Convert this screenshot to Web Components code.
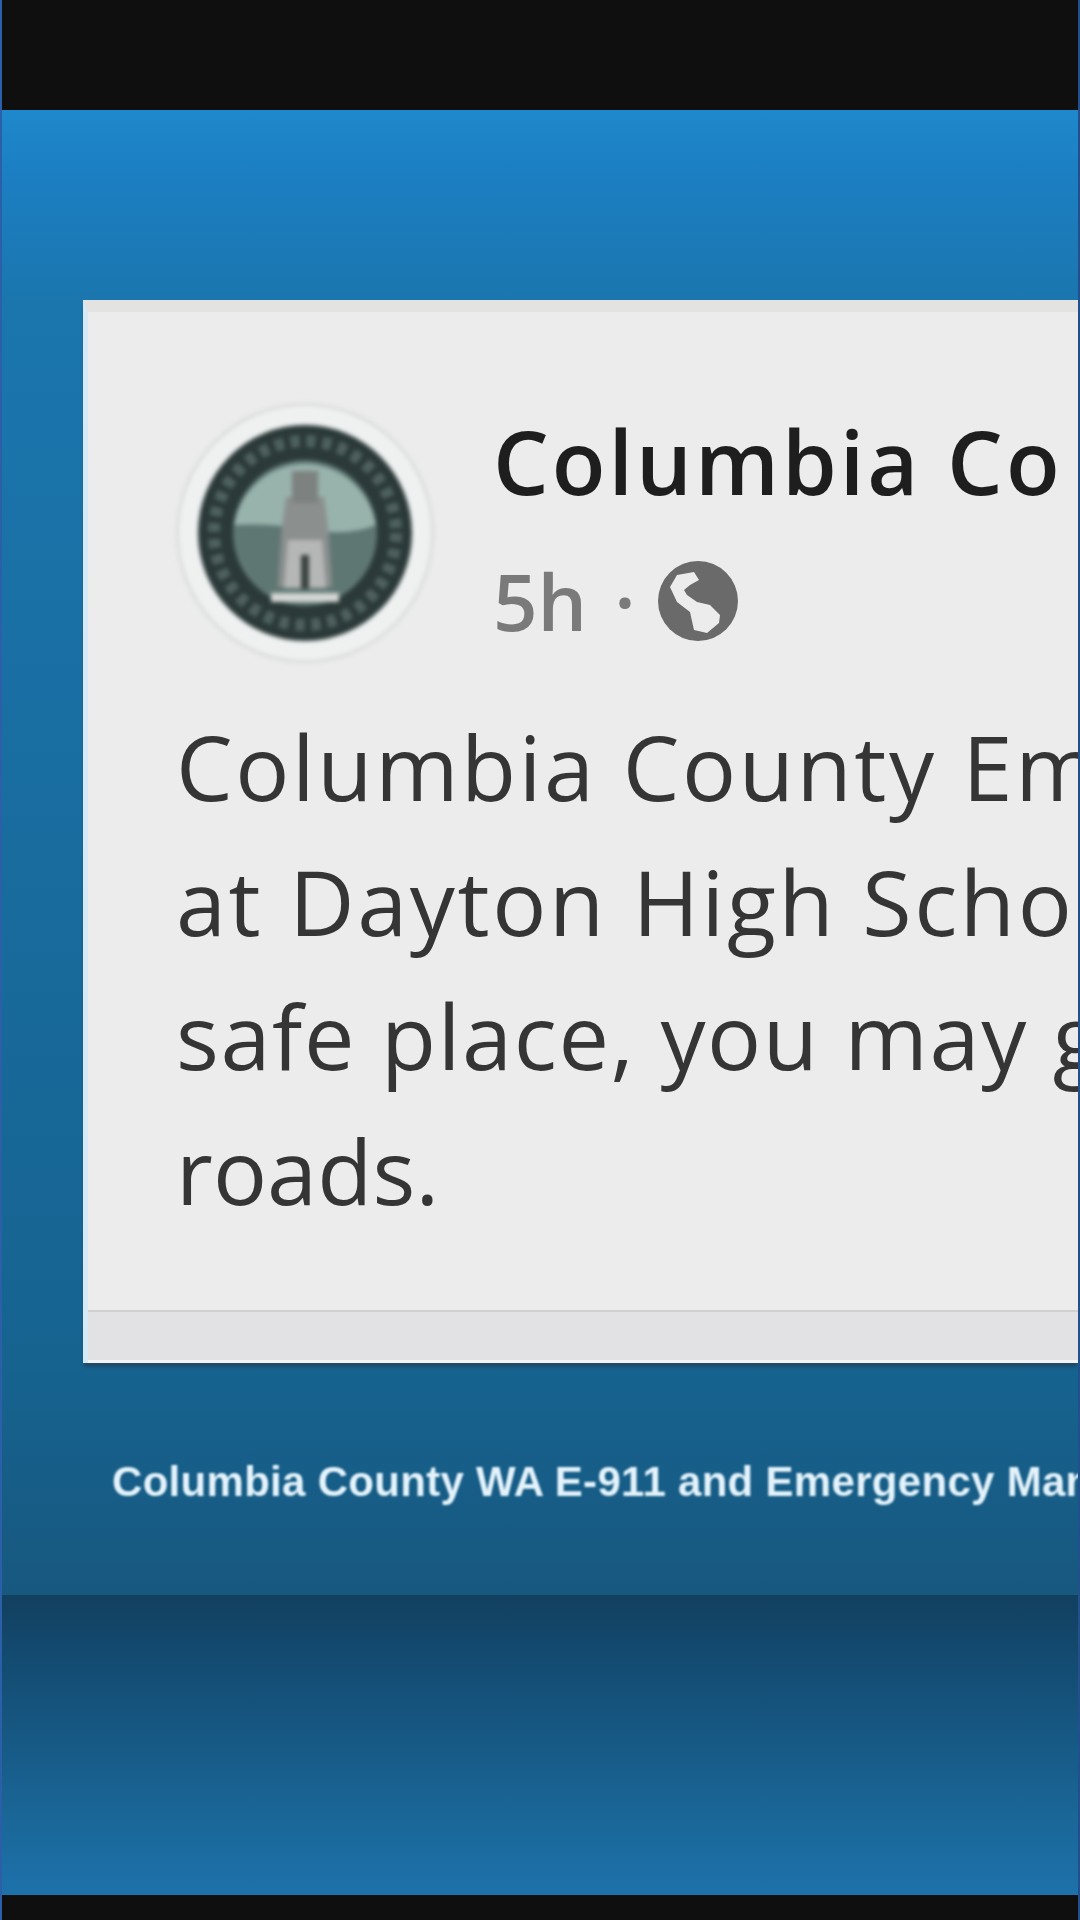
<!DOCTYPE html>
<html lang="en">
    <head>
        <meta charset="utf-8"/>
        <title>Columbia County post</title>
        <style>
            html, body { margin: 0; padding: 0; background: #0f0f0f; }
        </style>
    </head>
    <body>
        <news-screen>
            <post-card>
                <span slot="name">Columbia Co</span>
                <span slot="time">5h</span>
                <span slot="line">Columbia County Em</span>
                <span slot="line">at Dayton High Scho</span>
                <span slot="line" style="letter-spacing: 1.600px">safe place, you may g</span>
                <span slot="line" style="letter-spacing: 0.100px">roads.</span>
            </post-card>
            <span slot="caption">Columbia County WA E-911 and Emergency Man</span>
        </news-screen>

        <script>
            class CountySeal extends HTMLElement {
                constructor() {
                    super();
                    let shadowDom = this.attachShadow({mode: 'open'});
                    shadowDom.innerHTML = `
                        <style>
                            :host { display: block; width: 258px; height: 260px; flex: none; filter: blur(2.200px); }
                            svg { display: block; width: 100%; height: 100%; }
                        </style>
                        <svg viewBox="0 0 258 260">
                            <ellipse cx="129" cy="130" rx="127.500" ry="128.500" fill="#eff1f1" stroke="#d6d8d8" stroke-width="2.500"/>
                            <ellipse cx="129" cy="130" rx="107" ry="108" fill="#2b3a39"/>
                            <ellipse cx="129" cy="130" rx="91" ry="92" fill="none" stroke="#4f615e" stroke-width="12" stroke-dasharray="9 7"/>
                            <ellipse cx="129" cy="130" rx="72" ry="73" fill="#5f7773"/>
                            <path d="M58 122 A72 73 0 0 1 200 122 Q172 134 129 126 Q92 120 58 122Z" fill="#98b2ac"/>
                            <path d="M110 94 h38 l4 30 l4 60 h-54 l4 -60z" fill="#8b908f"/>
                            <rect x="116" y="68" width="26" height="32" fill="#7d8280"/>
                            <path d="M112 137 h34 l4 48 h-42z" fill="#b5b7b6"/>
                            <rect x="125" y="152" width="8" height="34" fill="#3b4442"/>
                            <rect x="95" y="190" width="68" height="9" fill="#d3d7d5"/>
                        </svg>
                    `;
                }
            }
            window.customElements.define("county-seal", CountySeal);

            class GlobeIcon extends HTMLElement {
                constructor() {
                    super();
                    let shadowDom = this.attachShadow({mode: 'open'});
                    shadowDom.innerHTML = `
                        <style>
                            :host { display: inline-block; width: 82px; height: 82px; }
                            svg { display: block; width: 100%; height: 100%; }
                        </style>
                        <svg viewBox="0 0 82 82">
                            <circle cx="41" cy="41" r="40" fill="#6a6a6b"/>
                            <path d="M37 12 L20 15 L13 27 L20 42 L33 52 L37 70 L50 73 L62 63 L63 55 L53 45 L40 42 L30 35 L27 30 L33 25 L42 20Z" fill="#ececec"/>
                        </svg>
                    `;
                }
            }
            window.customElements.define("globe-icon", GlobeIcon);

            class PostCard extends HTMLElement {
                constructor() {
                    super();
                    let shadowDom = this.attachShadow({mode: 'open'});
                    shadowDom.innerHTML = `
                        <style>
                            :host {
                                display: flex;
                                flex-direction: column;
                                height: 1063px;
                                box-sizing: border-box;
                                background: #ececec;
                                border-top: 12px solid #e3e3e1;
                                border-left: 5px solid #d5e9f6;
                                box-shadow: 0 5px 3px -1px #1d4a6b;
                                font-family: "Open Sans", "Noto Sans", sans-serif;
                                overflow: hidden;
                            }
                            #main { flex: 1; padding: 91px 0 0 88px; filter: blur(0.7px); }
                            #head { display: flex; align-items: flex-start; gap: 59px; }
                            #who { display: flex; flex-direction: column; }
                            #name { font-size: 88px; font-weight: 600; letter-spacing: 3px; color: #1e1e1e; line-height: 116px; white-space: nowrap; }
                            #meta { display: flex; align-items: center; gap: 21px; margin-top: 32px; font-size: 78px; font-weight: 600; color: #7a7a7a; line-height: 100px; }
                            #dot { font-size: 78px; margin-left: 6px; }
                            #text { margin-top: 36px; font-size: 90px; letter-spacing: 2.600px; line-height: 134.500px; color: #353535; white-space: nowrap; }
                            #text ::slotted(span) { display: block; }
                            #foot { height: 53px; border-top: 2px solid #d0d0d0; background: #e2e2e4; border-bottom: 3px solid #f4f4f4; box-sizing: border-box; }
                        </style>
                        <div id="main">
                            <div id="head">
                                <county-seal></county-seal>
                                <div id="who">
                                    <div id="name"><slot name="name"></slot></div>
                                    <div id="meta"><slot name="time"></slot><span id="dot">·</span><globe-icon></globe-icon></div>
                                </div>
                            </div>
                            <div id="text"><slot name="line"></slot></div>
                        </div>
                        <div id="foot"></div>
                    `;
                }
            }
            window.customElements.define("post-card", PostCard);

            class NewsScreen extends HTMLElement {
                constructor() {
                    super();
                    let shadowDom = this.attachShadow({mode: 'open'});
                    shadowDom.innerHTML = `
                        <style>
                            :host {
                                display: flex;
                                flex-direction: column;
                                width: 1080px;
                                height: 1920px;
                                box-sizing: border-box;
                                border-left: 2px solid #2b5fa8;
                                border-right: 2px solid #234f8c;
                                background: #0f0f0f;
                                overflow: hidden;
                            }
                            #top { height: 110px; flex: none; }
                            #band {
                                height: 1485px;
                                flex: none;
                                box-sizing: border-box;
                                padding: 190px 0 0 81px;
                                background: linear-gradient(#1f88cc 0, #1c7fc3 60px, #1b76ae 190px, #166390 1253px, #17587f 1485px);
                                overflow: hidden;
                            }
                            #caption {
                                margin: 96px 0 0 29px;
                                font: 700 42px "Liberation Sans", sans-serif;
                                letter-spacing: 0.300px;
                                line-height: 46px;
                                color: #e4f3fb;
                                white-space: nowrap;
                                filter: blur(0.8px);
                            }
                            #lower { height: 300px; flex: none; background: linear-gradient(#12405f 0, #134a70 60px, #1a6697 220px, #1d72ab 100%); }
                        </style>
                        <div id="top"></div>
                        <div id="band">
                            <slot></slot>
                            <div id="caption"><slot name="caption"></slot></div>
                        </div>
                        <div id="lower"></div>
                    `;
                }
            }
            window.customElements.define("news-screen", NewsScreen);
        </script>
    </body>
</html>
